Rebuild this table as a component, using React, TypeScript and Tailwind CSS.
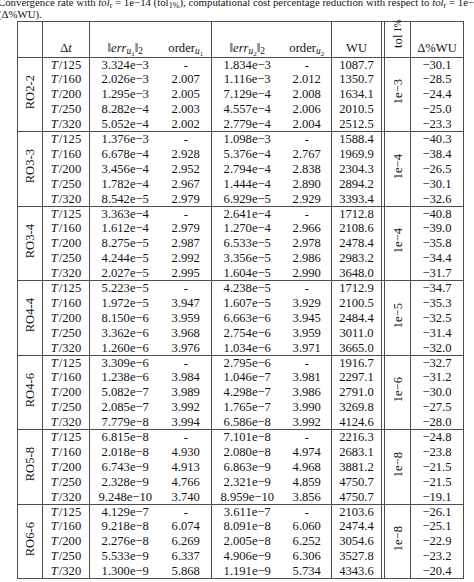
import React from "react";

type Row = [string, string, string, string, string, string, string];
type Group = { label: string; tol: string; rows: Row[] };

const groups: Group[] = [
  {
    label: "RO2-2",
    tol: "1e−3",
    rows: [
      ["125", "3.324e−3", "-", "1.834e−3", "-", "1087.7", "−30.1"],
      ["160", "2.026e−3", "2.007", "1.116e−3", "2.012", "1350.7", "−28.5"],
      ["200", "1.295e−3", "2.005", "7.129e−4", "2.008", "1634.1", "−24.4"],
      ["250", "8.282e−4", "2.003", "4.557e−4", "2.006", "2010.5", "−25.0"],
      ["320", "5.052e−4", "2.002", "2.779e−4", "2.004", "2512.5", "−23.3"],
    ],
  },
  {
    label: "RO3-3",
    tol: "1e−4",
    rows: [
      ["125", "1.376e−3", "-", "1.098e−3", "-", "1588.4", "−40.3"],
      ["160", "6.678e−4", "2.928", "5.376e−4", "2.767", "1969.9", "−38.4"],
      ["200", "3.456e−4", "2.952", "2.794e−4", "2.838", "2304.3", "−26.5"],
      ["250", "1.782e−4", "2.967", "1.444e−4", "2.890", "2894.2", "−30.1"],
      ["320", "8.542e−5", "2.979", "6.929e−5", "2.929", "3393.4", "−32.6"],
    ],
  },
  {
    label: "RO3-4",
    tol: "1e−4",
    rows: [
      ["125", "3.363e−4", "-", "2.641e−4", "-", "1712.8", "−40.8"],
      ["160", "1.612e−4", "2.979", "1.270e−4", "2.966", "2108.6", "−39.0"],
      ["200", "8.275e−5", "2.987", "6.533e−5", "2.978", "2478.4", "−35.8"],
      ["250", "4.244e−5", "2.992", "3.356e−5", "2.986", "2983.2", "−34.4"],
      ["320", "2.027e−5", "2.995", "1.604e−5", "2.990", "3648.0", "−31.7"],
    ],
  },
  {
    label: "RO4-4",
    tol: "1e−5",
    rows: [
      ["125", "5.223e−5", "-", "4.238e−5", "-", "1712.9", "−34.7"],
      ["160", "1.972e−5", "3.947", "1.607e−5", "3.929", "2100.5", "−35.3"],
      ["200", "8.150e−6", "3.959", "6.663e−6", "3.945", "2484.4", "−32.5"],
      ["250", "3.362e−6", "3.968", "2.754e−6", "3.959", "3011.0", "−31.4"],
      ["320", "1.260e−6", "3.976", "1.034e−6", "3.971", "3665.0", "−32.0"],
    ],
  },
  {
    label: "RO4-6",
    tol: "1e−6",
    rows: [
      ["125", "3.309e−6", "-", "2.795e−6", "-", "1916.7", "−32.7"],
      ["160", "1.238e−6", "3.984", "1.046e−7", "3.981", "2297.1", "−31.2"],
      ["200", "5.082e−7", "3.989", "4.298e−7", "3.986", "2791.0", "−30.0"],
      ["250", "2.085e−7", "3.992", "1.765e−7", "3.990", "3269.8", "−27.5"],
      ["320", "7.779e−8", "3.994", "6.586e−8", "3.992", "4124.6", "−28.0"],
    ],
  },
  {
    label: "RO5-8",
    tol: "1e−8",
    rows: [
      ["125", "6.815e−8", "-", "7.101e−8", "-", "2216.3", "−24.8"],
      ["160", "2.018e−8", "4.930", "2.080e−8", "4.974", "2683.1", "−23.8"],
      ["200", "6.743e−9", "4.913", "6.863e−9", "4.968", "3881.2", "−21.5"],
      ["250", "2.328e−9", "4.766", "2.321e−9", "4.859", "4750.7", "−21.5"],
      ["320", "9.248e−10", "3.740", "8.959e−10", "3.856", "4750.7", "−19.1"],
    ],
  },
  {
    label: "RO6-6",
    tol: "1e−8",
    rows: [
      ["125", "4.129e−7", "-", "3.611e−7", "-", "2103.6", "−26.1"],
      ["160", "9.218e−8", "6.074", "8.091e−8", "6.060", "2474.4", "−25.1"],
      ["200", "2.276e−8", "6.269", "2.005e−8", "6.252", "3054.6", "−22.9"],
      ["250", "5.533e−9", "6.337", "4.906e−9", "6.306", "3527.8", "−23.2"],
      ["320", "1.300e−9", "5.868", "1.191e−9", "5.734", "4343.6", "−20.4"],
    ],
  },
];

const line = "border-[#4d4d4d]";
const cell = "p-0 leading-[14px] text-center whitespace-nowrap";

export default function App() {
  return (
    <div className="w-[474px] h-[582px] overflow-hidden bg-white text-[#141414] font-['Liberation_Serif','Times_New_Roman',serif]">
      <div className="-mt-[4px] -ml-[2px] whitespace-nowrap text-[10.8px] leading-[12px]">
        <div>
          Convergence rate with <i>tol</i>
          <sub>r</sub> = 1e−14 (tol<sub>1%</sub>), computational cost percentage reduction with respect to{" "}
          <i>tol</i>
          <sub>r</sub> = 1e−8
        </div>
        <div>(Δ%WU).</div>
      </div>
      <table className={`ml-[17px] mt-[1px] w-[446px] table-fixed border-collapse border ${line} text-[12.6px]`}>
        <colgroup>
          <col className="w-[25px]" />
          <col className="w-[47px]" />
          <col className="w-[71px]" />
          <col className="w-[51px]" />
          <col className="w-[71px]" />
          <col className="w-[49px]" />
          <col className="w-[50px]" />
          <col className="w-[3px]" />
          <col className="w-[26px]" />
          <col className="w-[53px]" />
        </colgroup>
        <thead>
          <tr className="h-[30px]">
            <th className={`p-0 border-r ${line}`}></th>
            <th className={`p-0 pb-[1px] align-bottom font-normal leading-[15px] border-r ${line}`}>
              Δ<i>t</i>
            </th>
            <th className="p-0 pb-[1px] align-bottom font-normal leading-[15px]">
              ‖<i>err</i>
              <sub>
                <i>u</i>
                <sub className="text-[7px]">1</sub>
              </sub>
              ‖<sub>2</sub>
            </th>
            <th className={`p-0 pb-[1px] align-bottom font-normal leading-[15px] border-r ${line}`}>
              order
              <sub>
                <i>u</i>
                <sub className="text-[7px]">1</sub>
              </sub>
            </th>
            <th className="p-0 pb-[1px] align-bottom font-normal leading-[15px]">
              ‖<i>err</i>
              <sub>
                <i>u</i>
                <sub className="text-[7px]">2</sub>
              </sub>
              ‖<sub>2</sub>
            </th>
            <th className={`p-0 pb-[1px] align-bottom font-normal leading-[15px] border-r ${line}`}>
              order
              <sub>
                <i>u</i>
                <sub className="text-[7px]">2</sub>
              </sub>
            </th>
            <th className={`p-0 pb-[1px] align-bottom font-normal leading-[15px] border-r ${line}`}>WU</th>
            <th className={`p-0 border-r ${line}`}></th>
            <th className={`p-0 pb-[7px] align-bottom font-normal leading-[12px] border-r ${line}`}>
              <span className="inline-block rotate-180 [writing-mode:vertical-rl]">
                tol<sub>1%</sub>
              </span>
            </th>
            <th className="p-0 pb-[1px] align-bottom font-normal leading-[15px]">Δ%WU</th>
          </tr>
        </thead>
        {groups.map((g) => (
          <tbody key={g.label} className={`border-t ${line}`}>
            {g.rows.map((r, i) => (
              <tr key={r[0]} className={i === 0 ? "h-[14px]" : "h-[15px]"}>
                {i === 0 && (
                  <td rowSpan={5} className={`p-0 text-center align-middle border-r ${line}`}>
                    <span className="inline-block rotate-180 leading-[14px] [writing-mode:vertical-rl]">{g.label}</span>
                  </td>
                )}
                <td className={`${cell} border-r ${line}`}>
                  <i>T</i>
                  <span className="ml-[1px]">/</span>
                  {r[0]}
                </td>
                <td className={cell}>{r[1]}</td>
                <td className={`${cell} border-r ${line}`}>{r[2]}</td>
                <td className={cell}>{r[3]}</td>
                <td className={`${cell} border-r ${line}`}>{r[4]}</td>
                <td className={`${cell} border-r ${line}`}>{r[5]}</td>
                {i === 0 && <td rowSpan={5} className={`p-0 border-r ${line}`}></td>}
                {i === 0 && (
                  <td rowSpan={5} className={`p-0 text-center align-middle border-r ${line}`}>
                    <span className="inline-block rotate-180 leading-[14px] [writing-mode:vertical-rl]">{g.tol}</span>
                  </td>
                )}
                <td className={cell}>{r[6]}</td>
              </tr>
            ))}
          </tbody>
        ))}
      </table>
    </div>
  );
}
